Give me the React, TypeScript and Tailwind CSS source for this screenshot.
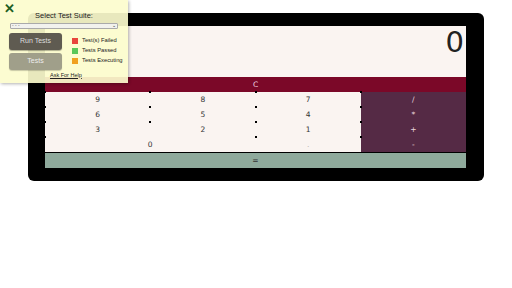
import React from "react";

const rows: { label: string; span?: number; op?: boolean; dim?: boolean }[][] = [
  [{ label: "9" }, { label: "8" }, { label: "7" }, { label: "/", op: true }],
  [{ label: "6" }, { label: "5" }, { label: "4" }, { label: "*", op: true }],
  [{ label: "3" }, { label: "2" }, { label: "1" }, { label: "+", op: true }],
  [{ label: "0", span: 2 }, { label: ".", dim: true }, { label: "-", op: true }],
];

function Key({ label, span, op, dim }: { label: string; span?: number; op?: boolean; dim?: boolean }) {
  return (
    <button
      type="button"
      className={
        "relative h-[15px] flex items-center justify-center text-[7.5px] leading-none " +
        (span === 2 ? "col-span-2 " : "") +
        (op ? "bg-[#552a45] text-[#e9d6de]" : "bg-[#faf4f1] " + (dim ? "text-[#b8b0ac]" : "text-[#333]"))
      }
    >
      <span className="absolute left-[-1px] top-[-1px] w-[2px] h-[2px] bg-black" />
      {label}
    </button>
  );
}

export default function App() {
  return (
    <div className="relative w-[512px] h-[288px] bg-white font-['DejaVu_Sans',sans-serif]">
      <div className="pt-[13px] pl-[28px]">
        <div className="w-[456px] h-[168px] bg-black rounded-[6px] pt-[13px] pl-[17px] pr-[18px] flex flex-col">
          <div className="h-[51px] bg-[#faf4f1] flex justify-end items-start pr-[2px]">
            <span className="text-[29px] leading-[33px] text-[#222]">0</span>
          </div>
          <button type="button" className="h-[15px] bg-[#7b0828] text-[#f1d9e0] text-[7.5px] leading-none">
            C
          </button>
          <div className="grid grid-cols-4 h-[61px] grid-rows-[15px_15px_15px_16px]">
            {rows.flat().map((k, i) => (
              <Key key={i} {...k} />
            ))}
          </div>
          <button type="button" className="relative h-[15px] bg-[#8faa9c] text-[#333] text-[7.5px] leading-none">
            =
          </button>
        </div>
      </div>

      <div className="absolute left-0 top-0 w-[128px] h-[83px] bg-[rgba(252,252,205,0.92)] shadow-[1px_1px_3px_rgba(0,0,0,0.3)] font-['Liberation_Sans',sans-serif]">
        <div className="absolute left-[4px] top-[2px] text-[#1d5e22] text-[13px] font-bold leading-none">✕</div>
        <div className="pt-[12px] text-center text-[7.5px] text-[#222] leading-none">Select Test Suite:</div>
        <div className="mx-[10px] mt-[3px] h-[6px] bg-[#f2f2ee] border border-[#aaa] rounded-[1px] flex items-center justify-between px-[1px]">
          <span className="text-[5px] leading-none text-[#666]">- - -</span>
          <span className="text-[5px] leading-none text-[#222]">⌄</span>
        </div>
        <div className="flex mt-[4px] pl-[9px]">
          <div className="flex flex-col gap-[3px]">
            <button type="button" className="w-[53px] h-[17px] rounded-[3px] bg-[#5f5b51] text-[#ddd] text-[7px] shadow-[0_1px_1px_rgba(0,0,0,0.3)]">
              Run Tests
            </button>
            <button type="button" className="w-[53px] h-[17px] rounded-[3px] bg-[#a09f8a] text-[#eee] text-[7px] shadow-[0_1px_1px_rgba(0,0,0,0.2)]">
              Tests
            </button>
          </div>
          <div className="flex flex-col gap-[4px] pl-[10px] pt-[5px] text-[5.8px] text-[#222] leading-none">
            <div className="flex items-center gap-[4px]">
              <span className="w-[6px] h-[6px] bg-[#e8453c]" />
              Test(s) Failed
            </div>
            <div className="flex items-center gap-[4px]">
              <span className="w-[6px] h-[6px] bg-[#5ac85a]" />
              Tests Passed
            </div>
            <div className="flex items-center gap-[4px]">
              <span className="w-[6px] h-[6px] bg-[#f0a020]" />
              Tests Executing
            </div>
          </div>
        </div>
        <div className="mt-[3px] pl-[50px] text-[5.5px] underline text-[#222] leading-none">Ask For Help</div>
      </div>
    </div>
  );
}
